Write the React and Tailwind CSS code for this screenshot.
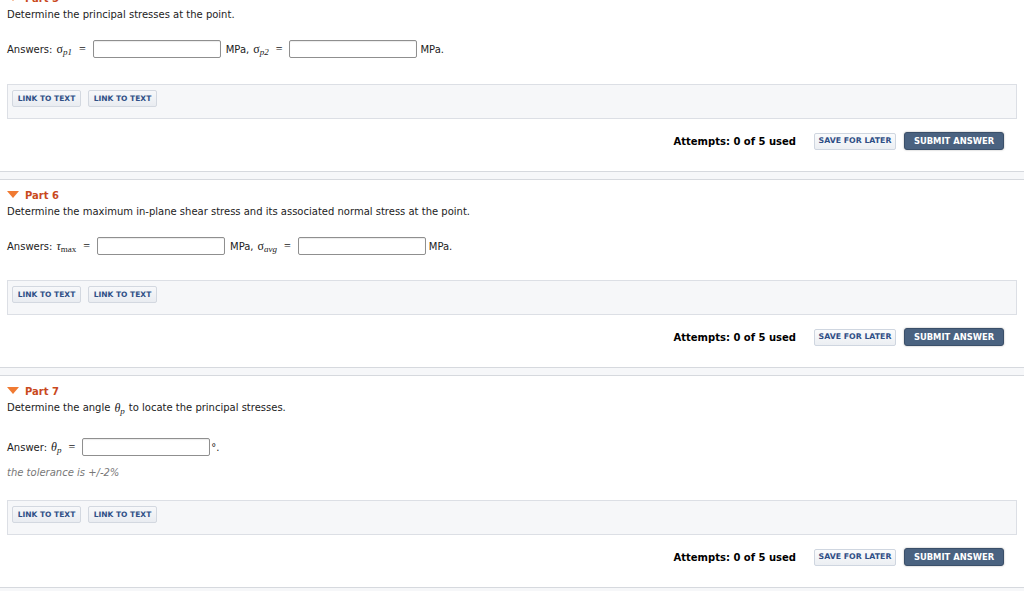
import React from "react";

const FONT = { fontFamily: "'DejaVu Sans', Verdana, sans-serif" };
const SERIF = "font-['Liberation_Serif','DejaVu_Serif',serif]";

const Triangle = () => (
  <svg width="12" height="8" viewBox="0 0 12 8" className="shrink-0">
    <polygon points="0,0 12,0 6,7" fill="#f07a32" />
  </svg>
);

const Input = ({ w = "w-[128px]" }) => (
  <span
    className={`inline-block ${w} h-[18px] bg-white border border-[#8f8f8f] rounded-[2px] shadow-[inset_0_1px_1px_rgba(0,0,0,0.08)]`}
  />
);

const LinkBox = () => (
  <div className="h-[35px] bg-[#f6f7f9] border border-[#dcdfe5] pl-[4px] pt-[5px] flex gap-[7px] items-start">
    {["LINK TO TEXT", "LINK TO TEXT"].map((t, i) => (
      <button
        key={i}
        className="h-[17px] w-[69px] rounded-[2px] border border-[#d3d8e0] bg-gradient-to-b from-[#f7f8fa] to-[#e9ecf1] text-[7.5px] font-bold text-[#2f4f86] flex items-center justify-center"
      >
        {t}
      </button>
    ))}
  </div>
);

const AttemptsRow = () => (
  <div className="flex items-center justify-end h-[18px] pr-[13px]">
    <span className="text-[10px] font-bold text-black mr-[18px]">
      Attempts: 0 of 5 used
    </span>
    <button className="h-[17px] w-[82px] rounded-[2px] border border-[#cfd6e0] bg-gradient-to-b from-[#fafbfc] to-[#eceff3] text-[7.8px] font-bold text-[#2f4f86] flex items-center justify-center mr-[8px]">
      SAVE FOR LATER
    </button>
    <button className="h-[18px] w-[100px] rounded-[3px] border border-[#3a4f69] bg-[#4a6280] shadow-[0_0_2px_rgba(0,0,0,0.35)] text-[8.4px] font-bold text-white flex items-center justify-center">
      SUBMIT ANSWER
    </button>
  </div>
);

const Separator = () => (
  <div className="h-[9px] bg-[#f6f7f9] border-t border-b border-[#d6d9de]" />
);

const Header = ({ n }) => (
  <div className="flex items-center gap-[6px] h-[12px]">
    <Triangle />
    <span className="text-[10px] font-bold text-[#c9491d]">Part {n}</span>
  </div>
);

const Sym = ({ base, sub, italic, subItalic = true }) => (
  <span className={`${SERIF} text-[12px] ${italic ? "italic" : ""}`}>
    {base}
    <sub className={`text-[9px] ${subItalic ? "italic" : "not-italic"}`}>{sub}</sub>
  </span>
);

const Eq = () => <span className={`${SERIF} text-[12px] mx-[7px]`}>=</span>;

export default function App() {
  return (
    <div className="w-[1024px] h-[591px] overflow-hidden bg-white text-[10px] text-[#222]" style={FONT}>
      {/* Part 5 (cut off at top) */}
      <div className="px-[7px]">
        <div className="-mt-[8px]">
          <Header n={5} />
        </div>
        <div className="mt-[5px] leading-[12px]">Determine the principal stresses at the point.</div>
        <div className="mt-[19px] flex items-center h-[18px]">
          <span>Answers: </span>
          <span className="ml-[4px]"><Sym base="σ" sub="p1" /></span>
          <Eq />
          <Input />
          <span className="ml-[5px]">MPa, </span>
          <span className="ml-[4px]"><Sym base="σ" sub="p2" /></span>
          <Eq />
          <Input />
          <span className="ml-[3px]">MPa.</span>
        </div>
        <div className="mt-[26px]">
          <LinkBox />
        </div>
        <div className="mt-[13px]">
          <AttemptsRow />
        </div>
      </div>
      <div className="mt-[21px]">
        <Separator />
      </div>

      {/* Part 6 */}
      <div className="px-[7px] pt-[9px]">
        <Header n={6} />
        <div className="mt-[5px] leading-[12px]">
          Determine the maximum in-plane shear stress and its associated normal stress at the point.
        </div>
        <div className="mt-[19px] flex items-center h-[18px]">
          <span>Answers: </span>
          <span className="ml-[4px]"><Sym base="τ" sub="max" italic subItalic={false} /></span>
          <Eq />
          <Input />
          <span className="ml-[5px]">MPa, </span>
          <span className="ml-[4px]"><Sym base="σ" sub="avg" /></span>
          <Eq />
          <Input />
          <span className="ml-[3px]">MPa.</span>
        </div>
        <div className="mt-[25px]">
          <LinkBox />
        </div>
        <div className="mt-[13px]">
          <AttemptsRow />
        </div>
      </div>
      <div className="mt-[21px]">
        <Separator />
      </div>

      {/* Part 7 */}
      <div className="px-[7px] pt-[9px]">
        <Header n={7} />
        <div className="mt-[5px] leading-[12px] flex items-center">
          <span>Determine the angle</span>
          <span className={`${SERIF} italic text-[12px] mx-[4px]`}>
            θ<sub className="text-[9px]">p</sub>
          </span>
          <span>to locate the principal stresses.</span>
        </div>
        <div className="mt-[24px] flex items-center h-[18px]">
          <span>Answer: </span>
          <span className={`${SERIF} italic text-[12px] ml-[4px]`}>
            θ<sub className="text-[9px]">p</sub>
          </span>
          <Eq />
          <Input />
          <span className="ml-[1px]">°.</span>
        </div>
        <div className="mt-[11px] italic text-[#777] leading-[12px]">the tolerance is +/-2%</div>
        <div className="mt-[21px]">
          <LinkBox />
        </div>
        <div className="mt-[13px]">
          <AttemptsRow />
        </div>
      </div>
      <div className="mt-[21px]">
        <Separator />
      </div>
    </div>
  );
}
